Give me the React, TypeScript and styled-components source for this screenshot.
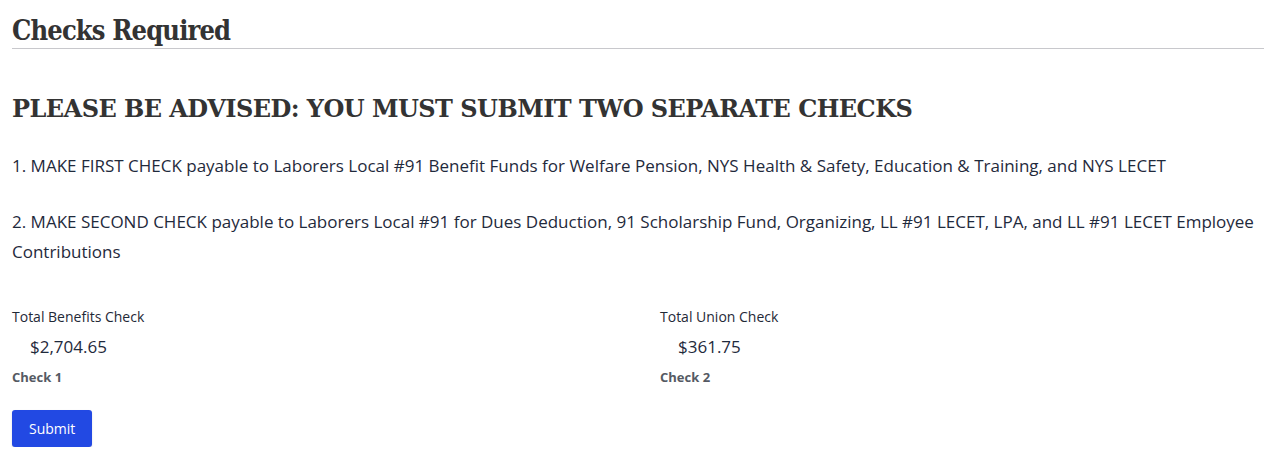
import * as React from 'react'
import styled, { createGlobalStyle } from 'styled-components'

const GlobalStyle = createGlobalStyle`
  html, body {
    margin: 0;
    padding: 0;
    background: #ffffff;
  }
  body {
    font-family: 'Open Sans', 'Noto Sans', sans-serif;
    color: #1f2937;
  }
`

const Page = styled.div`
  padding: 15px 0 0 12px;
`

const Title = styled.h1`
  margin: 0;
  padding-bottom: 1px;
  font-family: 'DejaVu Serif Condensed', 'DejaVu Serif', serif;
  font-weight: 700;
  font-size: 27px;
  line-height: 32px;
  letter-spacing: -0.85px;
  color: #333333;
  border-bottom: 1px solid #c8c8cc;
`

const Notice = styled.h2`
  margin: 44px 0 0;
  font-family: 'DejaVu Serif', 'Liberation Serif', serif;
  font-weight: 700;
  font-size: 24px;
  line-height: 32px;
  letter-spacing: -0.55px;
  color: #333333;
`

const Instruction = styled.p`
  margin: 26px 0 0;
  padding-right: 8px;
  font-size: 17px;
  line-height: 30px;
  color: #1f2a3c;
`

const Totals = styled.div`
  display: grid;
  grid-template-columns: 648px 1fr;
  margin-top: 41px;
`

const Field = styled.div`
  display: flex;
  flex-direction: column;
`

const Label = styled.span`
  font-size: 14px;
  line-height: 18px;
  color: #1f2937;
`

const Amount = styled.span`
  margin-top: 10px;
  padding-left: 18px;
  font-size: 17px;
  line-height: 22px;
  color: #1f2a3c;
`

const Caption = styled.span`
  margin-top: 9px;
  font-size: 13px;
  font-weight: 700;
  line-height: 20px;
  color: #555a63;
`

const SubmitButton = styled.button`
  margin-top: 23px;
  height: 37px;
  padding: 0 17px;
  border: none;
  border-radius: 3px;
  background: #2249e3;
  color: #ffffff;
  font-family: 'Open Sans', 'Noto Sans', sans-serif;
  font-size: 14px;
  box-shadow: 0 1px 2px rgba(0, 0, 0, 0.15);
  cursor: pointer;
`

const totals = [
  { label: 'Total Benefits Check', amount: '$2,704.65', caption: 'Check 1' },
  { label: 'Total Union Check', amount: '$361.75', caption: 'Check 2' },
]

export default function App() {
  return (
    <Page>
      <GlobalStyle />
      <Title>Checks Required</Title>
      <Notice>PLEASE BE ADVISED: YOU MUST SUBMIT TWO SEPARATE CHECKS</Notice>
      <Instruction>
        1. MAKE FIRST CHECK payable to Laborers Local #91 Benefit Funds for
        Welfare Pension, NYS Health &amp; Safety, Education &amp; Training, and
        NYS LECET
      </Instruction>
      <Instruction>
        2. MAKE SECOND CHECK payable to Laborers Local #91 for Dues Deduction,
        91 Scholarship Fund, Organizing, LL #91 LECET, LPA, and LL #91 LECET
        Employee Contributions
      </Instruction>
      <Totals>
        {totals.map((t) => (
          <Field key={t.caption}>
            <Label>{t.label}</Label>
            <Amount>{t.amount}</Amount>
            <Caption>{t.caption}</Caption>
          </Field>
        ))}
      </Totals>
      <SubmitButton type='button'>Submit</SubmitButton>
    </Page>
  )
}
